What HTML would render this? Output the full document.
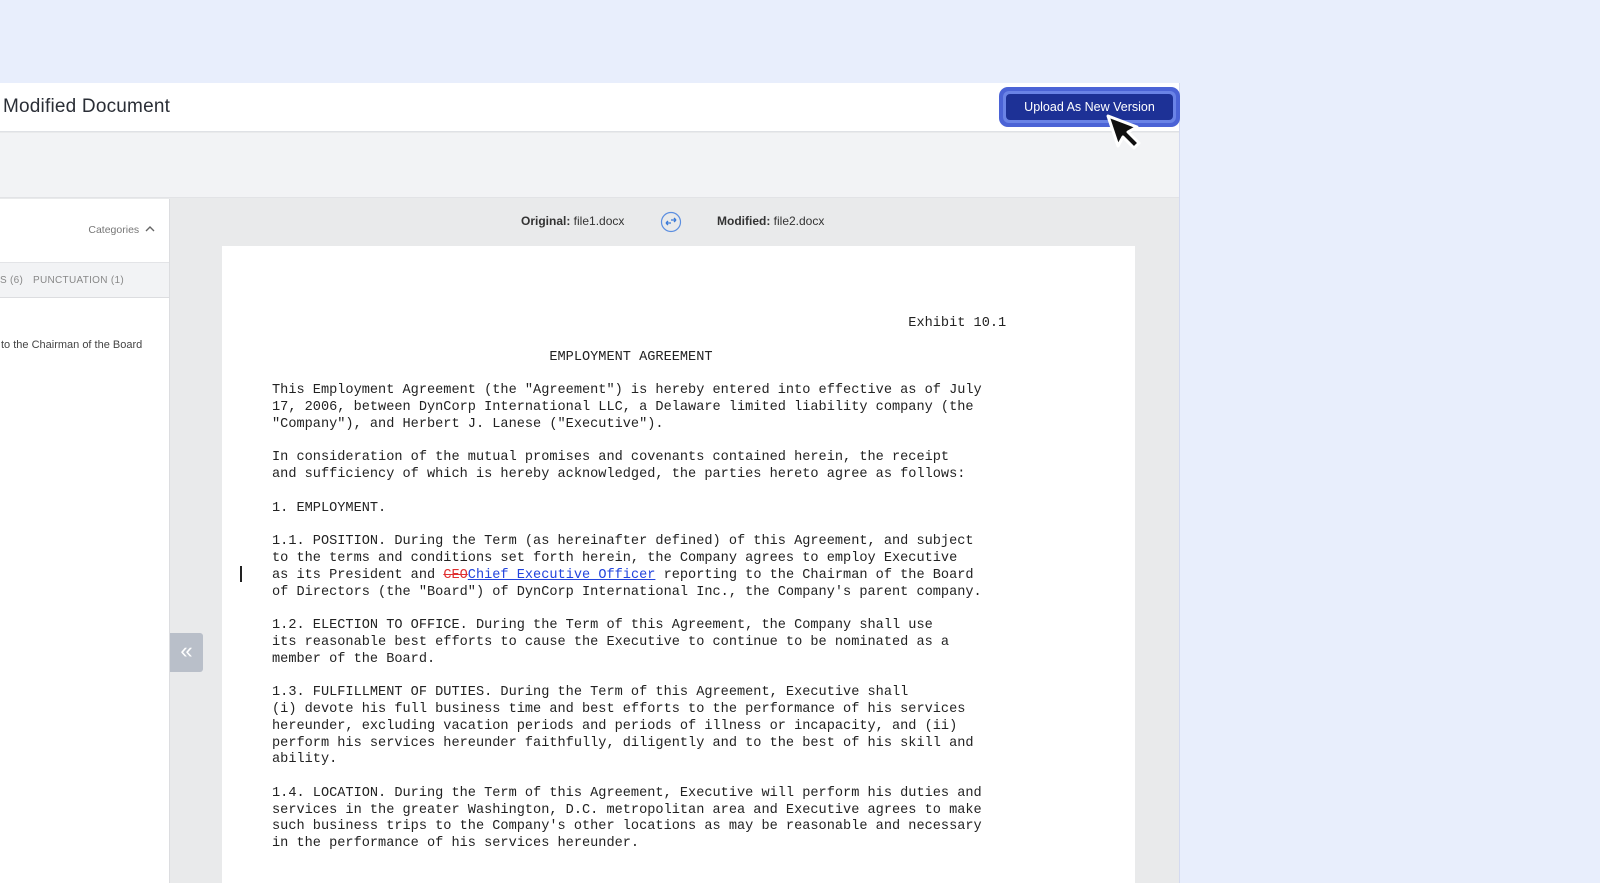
<!DOCTYPE html>
<html><head><meta charset="utf-8"><style>
*{margin:0;padding:0;box-sizing:border-box}
html,body{width:1600px;height:883px;overflow:hidden}
body{background:#e8eefc;position:relative;font-family:"Liberation Sans",sans-serif}
.app{position:absolute;left:0;top:83px;width:1180px;height:800px;background:#e9eaeb;border-right:1px solid #d4daf0;overflow:hidden}
.hdr{position:absolute;left:0;top:0;width:1180px;height:49px;background:#fff;border-bottom:1px solid #dfe1e5}
.hdr h1{position:absolute;left:3px;top:13px;font-size:19px;font-weight:normal;color:#2a2e36;letter-spacing:.2px}
.band{position:absolute;left:0;top:50px;width:1180px;height:65px;background:#f2f3f5;border-bottom:1px solid #e2e3e6}
.side{position:absolute;left:0;top:116px;width:170px;height:684px;background:#fff;border-right:1px solid #dcdde0}
.cat{position:absolute;right:14px;top:25px;font-size:10.5px;color:#777}
.tabs{position:absolute;left:0;top:63px;width:169px;height:36px;background:#f2f3f5;border-top:1px solid #e3e4e7;border-bottom:1px solid #dcdde0;font-size:10px;color:#888;letter-spacing:.3px}
.item{position:absolute;left:1px;top:140px;font-size:11px;color:#444}
.files{position:absolute;top:131px;font-size:12px;color:#333}
.page{position:absolute;left:222px;top:163px;width:913px;height:637px;background:#fff;overflow:hidden}
pre{position:absolute;left:50px;top:70px;font-family:"Liberation Mono",monospace;font-size:13.6px;line-height:16.78px;color:#222}
.del{color:#e03030;text-decoration:line-through}
.ins{color:#2244dd;text-decoration:underline}
.btnwrap{position:absolute;left:999px;top:87px;width:181px;height:40px;border-radius:9px;background:#4b63d6;padding:4px}
.btn{width:100%;height:100%;border-radius:6px;background:#6a83e6;padding:3px}
.btn div{width:100%;height:100%;border-radius:4px;background:#1d3196;color:#fff;font-size:12.5px;text-align:center;line-height:26px}
.col{position:absolute;left:170px;top:633px;width:33px;height:39px;background:#b9bfc9;border-radius:0 3px 3px 0;color:#fff;font-size:22px;text-align:center;line-height:36px}
</style></head><body>
<div class="app">
 <div class="hdr"><h1>Modified Document</h1></div>
 <div class="band"></div>
 <div class="side">
  <div class="cat">Categories &nbsp;<svg width="10" height="8" viewBox="0 0 10 8"><path d="M1 6 L5 2 L9 6" fill="none" stroke="#666" stroke-width="1.4"/></svg></div>
  <div class="tabs"><span style="position:absolute;left:0;top:12px">S (6)</span><span style="position:absolute;left:33px;top:12px">PUNCTUATION (1)</span></div>
  <div class="item">to the Chairman of the Board</div>
 </div>
 <div class="files" style="left:521px"><b>Original:</b> file1.docx</div>
 <svg style="position:absolute;left:660px;top:128px" width="22" height="22" viewBox="0 0 22 22"><circle cx="11" cy="11" r="9.5" fill="none" stroke="#5b8ee0" stroke-width="1.2"/><path d="M6 12h5M6 12l2-2M6 12l2 2M11 9h5M16 9l-2-2M16 9l-2 2" fill="none" stroke="#3b7ad8" stroke-width="1.3"/></svg>
 <div class="files" style="left:717px"><b>Modified:</b> file2.docx</div>
 <div class="page">
<pre>                                                                              Exhibit 10.1

                                  EMPLOYMENT AGREEMENT

This Employment Agreement (the "Agreement") is hereby entered into effective as of July
17, 2006, between DynCorp International LLC, a Delaware limited liability company (the
"Company"), and Herbert J. Lanese ("Executive").

In consideration of the mutual promises and covenants contained herein, the receipt
and sufficiency of which is hereby acknowledged, the parties hereto agree as follows:

1. EMPLOYMENT.

1.1. POSITION. During the Term (as hereinafter defined) of this Agreement, and subject
to the terms and conditions set forth herein, the Company agrees to employ Executive
as its President and <span class="del">CEO</span><span class="ins">Chief Executive Officer</span> reporting to the Chairman of the Board
of Directors (the "Board") of DynCorp International Inc., the Company's parent company.

1.2. ELECTION TO OFFICE. During the Term of this Agreement, the Company shall use
its reasonable best efforts to cause the Executive to continue to be nominated as a
member of the Board.

1.3. FULFILLMENT OF DUTIES. During the Term of this Agreement, Executive shall
(i) devote his full business time and best efforts to the performance of his services
hereunder, excluding vacation periods and periods of illness or incapacity, and (ii)
perform his services hereunder faithfully, diligently and to the best of his skill and
ability.

1.4. LOCATION. During the Term of this Agreement, Executive will perform his duties and
services in the greater Washington, D.C. metropolitan area and Executive agrees to make
such business trips to the Company's other locations as may be reasonable and necessary
in the performance of his services hereunder.</pre>
 </div>
 <div style="position:absolute;left:240px;top:483px;width:2px;height:16px;background:#222"></div>
</div>
<div class="col">«</div>
<div class="btnwrap"><div class="btn"><div>Upload As New Version</div></div></div>
<svg style="position:absolute;left:1102px;top:112px" width="46" height="46" viewBox="0 0 46 46"><path d="M6 4 L16 34 L21 25 L32 36 L37 31 L26 20 L35 15 Z" fill="#111" stroke="#fff" stroke-width="3" stroke-linejoin="round"/></svg>
</body></html>
